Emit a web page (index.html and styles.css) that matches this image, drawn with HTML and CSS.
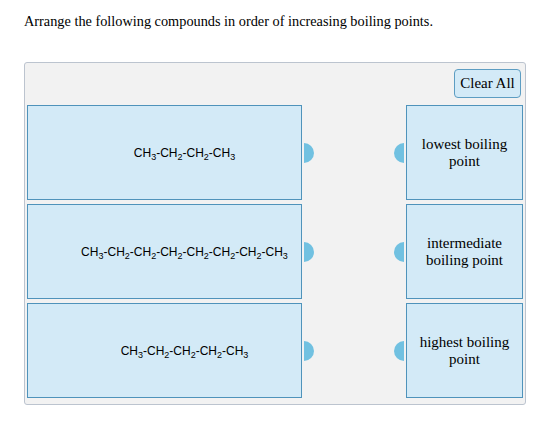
FILE: index.html
```html
<!DOCTYPE html>
<html lang="en">
<head>
<meta charset="utf-8">
<title>Boiling point ranking</title>
<link rel="stylesheet" href="styles.css">
</head>
<body>
<div class="page">
  <p class="prompt">Arrange the following compounds in order of increasing boiling points.</p>
  <div class="board">
    <div class="toolbar">
      <button class="clear-btn" type="button">Clear All</button>
    </div>
    <div class="pairs">
      <div class="item">
        <span class="formula">CH<sub>3</sub>-CH<sub>2</sub>-CH<sub>2</sub>-CH<sub>3</sub></span>
      </div>
      <div class="link">
        <span class="knob knob-out"></span>
        <span class="knob knob-in"></span>
      </div>
      <div class="target">lowest boiling point</div>

      <div class="item">
        <span class="formula">CH<sub>3</sub>-CH<sub>2</sub>-CH<sub>2</sub>-CH<sub>2</sub>-CH<sub>2</sub>-CH<sub>2</sub>-CH<sub>2</sub>-CH<sub>3</sub></span>
      </div>
      <div class="link">
        <span class="knob knob-out"></span>
        <span class="knob knob-in"></span>
      </div>
      <div class="target">intermediate boiling point</div>

      <div class="item">
        <span class="formula">CH<sub>3</sub>-CH<sub>2</sub>-CH<sub>2</sub>-CH<sub>2</sub>-CH<sub>3</sub></span>
      </div>
      <div class="link">
        <span class="knob knob-out"></span>
        <span class="knob knob-in"></span>
      </div>
      <div class="target">highest boiling point</div>
    </div>
  </div>
</div>
</body>
</html>
```
FILE: styles.css
```css
html, body {
  margin: 0;
  padding: 0;
  background: #ffffff;
}

.page {
  padding: 13px 0 0 24px;
  font-family: "Liberation Serif", "Times New Roman", serif;
  color: #000000;
}

.prompt {
  margin: 0 0 33px 0;
  font-size: 14.3px;
  line-height: 16px;
}

.board {
  width: 496px;
  padding: 6px 2px 6px 2px;
  background: #f2f2f2;
  border: 1px solid #bcc4cf;
  border-radius: 3px;
}

.toolbar {
  display: flex;
  justify-content: flex-end;
  padding-right: 2px;
  margin-bottom: 7px;
}

.clear-btn {
  height: 29px;
  width: 67px;
  padding: 0;
  font-family: "Liberation Serif", "Times New Roman", serif;
  font-size: 15px;
  color: #000000;
  background: #d3eaf7;
  border: 1px solid #5d9dc2;
  border-radius: 4px;
}

.pairs {
  display: grid;
  grid-template-columns: 275px 104px 117px;
  grid-auto-rows: 95px;
  row-gap: 4px;
}

.item,
.target {
  box-sizing: border-box;
  background: #d3eaf7;
  border: 1px solid #4f93bb;
  display: flex;
  align-items: center;
  justify-content: center;
}

.item {
  padding-left: 40px;
}

.formula {
  font-family: "Liberation Sans", Arial, sans-serif;
  font-size: 12px;
  line-height: 14px;
}

.formula sub {
  font-size: 9px;
  vertical-align: -3px;
  line-height: 0;
}

.target {
  padding: 0 6px;
  text-align: center;
  font-size: 15px;
  line-height: 17px;
}

.link {
  display: flex;
  align-items: center;
  justify-content: space-between;
  padding: 0 2px;
}

.knob {
  width: 10px;
  height: 20px;
  background: #71c1e1;
}

.knob-out {
  border-radius: 0 10px 10px 0;
}

.knob-in {
  border-radius: 10px 0 0 10px;
}
```
